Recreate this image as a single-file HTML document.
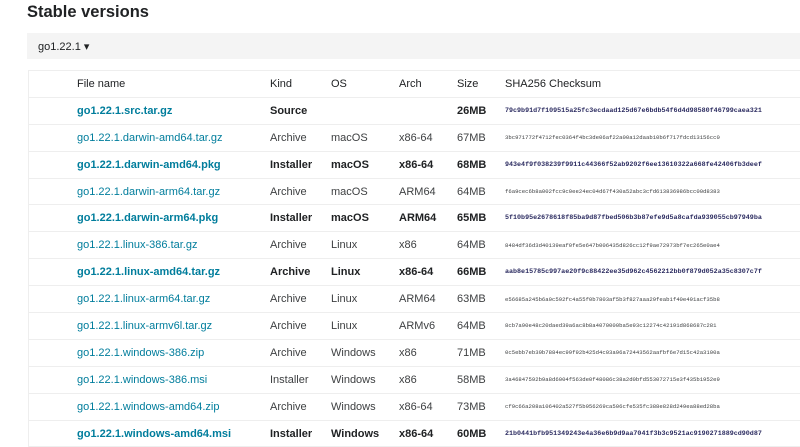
<!DOCTYPE html>
<html><head><meta charset="utf-8"><style>
body{margin:0;background:#fff;font-family:"Liberation Sans",sans-serif;width:800px;height:446px;overflow:hidden;}
h2{position:absolute;left:27px;top:3px;margin:0;font-size:16.5px;font-weight:bold;color:#202224;}
.bar{position:absolute;left:27px;top:33px;width:773px;height:26px;background:#f4f4f4;}
.bar span{position:absolute;left:11px;top:7px;font-size:11px;color:#202224;}
table{position:absolute;left:28px;top:70px;border-collapse:collapse;width:772px;border-top:1px solid #eee;border-left:1px solid #eee;}
td,th{height:25.9px;border-bottom:1px solid #eee;padding:0;font-size:11px;color:#3e4042;text-align:left;white-space:nowrap;}
th{font-weight:normal;color:#202224;}
td:first-child,th:first-child{padding-left:48px;width:193px;}
.k{width:61px}.o{width:68px}.a{width:58px}.s{width:48px}
a{color:#007d9c;text-decoration:none;}
tr.b td{font-weight:bold;color:#202224;}
tr.b a{color:#007d9c;}
.c{font-family:"Liberation Mono",monospace;font-size:5.6px;}
tr.b .c{color:#2b2b60;font-size:6.7px;}
</style></head><body>
<h2>Stable versions</h2>
<div class="bar"><span>go1.22.1 ▾</span></div>
<table>
<tr><th>File name</th><th class="k">Kind</th><th class="o">OS</th><th class="a">Arch</th><th class="s">Size</th><th>SHA256 Checksum</th></tr>
<tr class="b"><td><a>go1.22.1.src.tar.gz</a></td><td>Source</td><td></td><td></td><td>26MB</td><td class="c">79c9b91d7f109515a25fc3ecdaad125d67e6bdb54f6d4d98580f46799caea321</td></tr>
<tr><td><a>go1.22.1.darwin-amd64.tar.gz</a></td><td>Archive</td><td>macOS</td><td>x86-64</td><td>67MB</td><td class="c">3bc971772f4712fec0364f4bc3de06af22a00a12daab10b6f717fdcd13156cc0</td></tr>
<tr class="b"><td><a>go1.22.1.darwin-amd64.pkg</a></td><td>Installer</td><td>macOS</td><td>x86-64</td><td>68MB</td><td class="c">943e4f9f038239f9911c44366f52ab9202f6ee13610322a668fe42406fb3deef</td></tr>
<tr><td><a>go1.22.1.darwin-arm64.tar.gz</a></td><td>Archive</td><td>macOS</td><td>ARM64</td><td>64MB</td><td class="c">f6a9cec6b8a002fcc9c0ee24ec04d67f430a52abc3cfd613836986bcc00d8383</td></tr>
<tr class="b"><td><a>go1.22.1.darwin-arm64.pkg</a></td><td>Installer</td><td>macOS</td><td>ARM64</td><td>65MB</td><td class="c">5f10b95e2678618f85ba9d87fbed506b3b87efe9d5a8cafda939055cb97949ba</td></tr>
<tr><td><a>go1.22.1.linux-386.tar.gz</a></td><td>Archive</td><td>Linux</td><td>x86</td><td>64MB</td><td class="c">8484df36d3d40139eaf0fe5e647b006435d826cc12f9ae72973bf7ec265e0ae4</td></tr>
<tr class="b"><td><a>go1.22.1.linux-amd64.tar.gz</a></td><td>Archive</td><td>Linux</td><td>x86-64</td><td>66MB</td><td class="c">aab8e15785c997ae20f9c88422ee35d962c4562212bb0f879d052a35c8307c7f</td></tr>
<tr><td><a>go1.22.1.linux-arm64.tar.gz</a></td><td>Archive</td><td>Linux</td><td>ARM64</td><td>63MB</td><td class="c">e56685a245b6a0c592fc4a55f0b7803af5b3f827aaa29feab1f40e491acf35b8</td></tr>
<tr><td><a>go1.22.1.linux-armv6l.tar.gz</a></td><td>Archive</td><td>Linux</td><td>ARMv6</td><td>64MB</td><td class="c">8cb7a90e48c20daed39a6ac8b8a4070000ba5e93c12274c42191d868687c281</td></tr>
<tr><td><a>go1.22.1.windows-386.zip</a></td><td>Archive</td><td>Windows</td><td>x86</td><td>71MB</td><td class="c">0c5ebb7eb39b7884ec99f92b425d4c03a96a72443562aafbf6e7d15c42a3100a</td></tr>
<tr><td><a>go1.22.1.windows-386.msi</a></td><td>Installer</td><td>Windows</td><td>x86</td><td>58MB</td><td class="c">3a46847592b9a8d6004f563de0f48086c38a2d0bfd553072715e3f435b1952e9</td></tr>
<tr><td><a>go1.22.1.windows-amd64.zip</a></td><td>Archive</td><td>Windows</td><td>x86-64</td><td>73MB</td><td class="c">cf9c66a208a106402a527f5b956269ca506cfe535fc388e828d249ea88ed28ba</td></tr>
<tr class="b"><td><a>go1.22.1.windows-amd64.msi</a></td><td>Installer</td><td>Windows</td><td>x86-64</td><td>60MB</td><td class="c">21b0441bfb951349243e4a36e6b9d9aa7041f3b3c9521ac9190271889cd90d87</td></tr>
</table>
</body></html>
